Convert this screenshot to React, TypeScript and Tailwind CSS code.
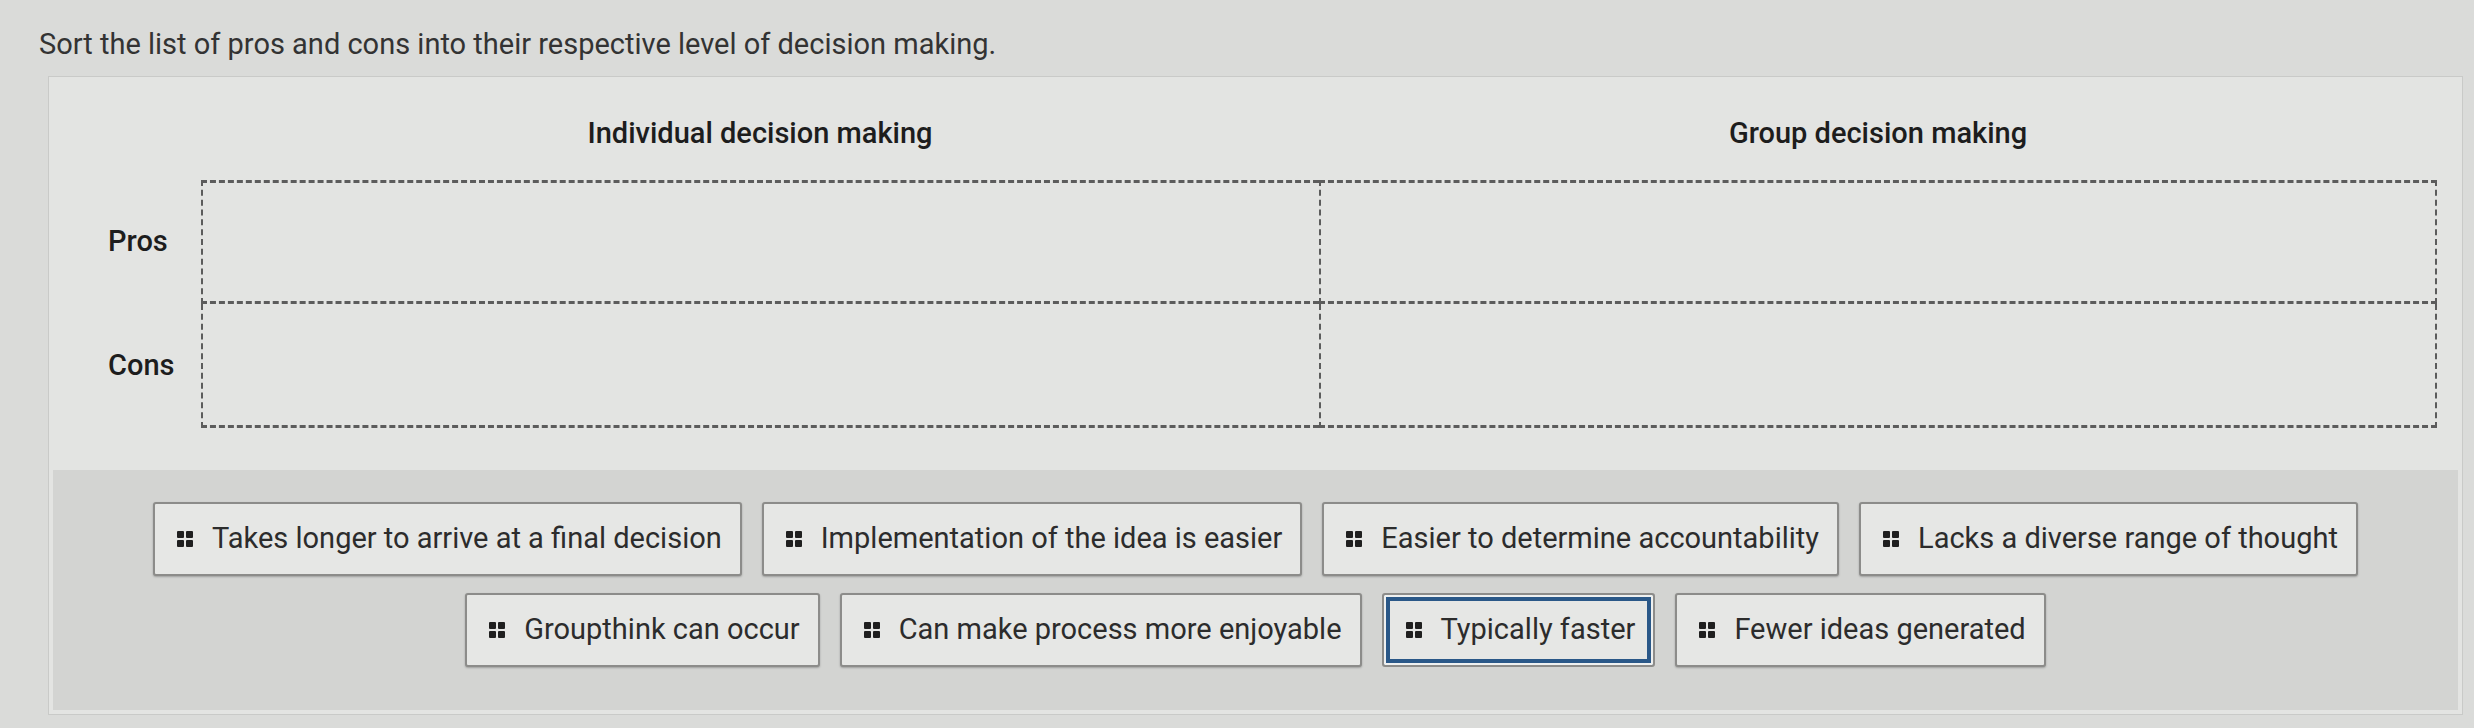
import React from "react";

const choices = [
  { text: "Takes longer to arrive at a final decision" },
  { text: "Implementation of the idea is easier" },
  { text: "Easier to determine accountability" },
  { text: "Lacks a diverse range of thought" },
  { text: "Groupthink can occur" },
  { text: "Can make process more enjoyable" },
  { text: "Typically faster", selected: true },
  { text: "Fewer ideas generated" },
];

function DragHandle() {
  return (
    <span className="grid grid-cols-2 gap-[2px] shrink-0">
      <span className="w-[7px] h-[7px] rounded-[1px] bg-[#1f1f1f]" />
      <span className="w-[7px] h-[7px] rounded-[1px] bg-[#1f1f1f]" />
      <span className="w-[7px] h-[7px] rounded-[1px] bg-[#1f1f1f]" />
      <span className="w-[7px] h-[7px] rounded-[1px] bg-[#1f1f1f]" />
    </span>
  );
}

function Chip({ text, selected }: { text: string; selected?: boolean }) {
  return (
    <div
      className={`h-[74px] flex items-center gap-[19px] pl-[22px] pr-[18px] rounded-[3px] border-2 border-[#8c8c8a] bg-[#e6e7e5] text-[29px] text-[#2c2c2c] ${
        selected
          ? "shadow-[inset_0_0_0_2px_#eef0f0,inset_0_0_0_6px_#2a5888]"
          : "shadow-[0_1px_2px_rgba(0,0,0,0.25)]"
      }`}
    >
      <DragHandle />
      <span className="whitespace-nowrap">{text}</span>
    </div>
  );
}

export default function App() {
  return (
    <div
      className="min-h-screen bg-[#dadbd9] pt-[27px] text-[#333]"
      style={{ fontFamily: "Roboto, 'Liberation Sans', sans-serif" }}
    >
      <p className="pl-[39px] text-[29px] leading-[34px]">
        Sort the list of pros and cons into their respective level of decision making.
      </p>

      <div className="ml-[48px] mr-[11px] mt-[15px] border border-[#c9cac8] bg-[#e3e4e2] pb-[4px]">
        {/* column headers */}
        <div className="grid grid-cols-[152px_1fr_1fr] mr-[25px] h-[103px] items-center pt-[10px] text-[29px] font-medium text-[#1d1d1d]">
          <div />
          <div className="text-center">Individual decision making</div>
          <div className="text-center">Group decision making</div>
        </div>

        {/* drop zones */}
        <div className="grid grid-cols-[152px_1fr_1fr] mr-[25px]">
          <div className="h-[124px] flex items-center pl-[59px] text-[29px] font-medium text-[#1d1d1d]">
            Pros
          </div>
          <div className="border-x-2 border-y-[3px] border-dashed border-[#5c5c5c] border-r-0" />
          <div className="border-x-2 border-y-[3px] border-dashed border-[#5c5c5c]" />
          <div className="h-[124px] flex items-center pl-[59px] text-[29px] font-medium text-[#1d1d1d]">
            Cons
          </div>
          <div className="border-x-2 border-y-[3px] border-dashed border-[#5c5c5c] border-t-0 border-r-0" />
          <div className="border-x-2 border-y-[3px] border-dashed border-[#5c5c5c] border-t-0" />
        </div>

        {/* choice bank */}
        <div className="mx-[4px] mt-[42px] h-[240px] bg-[#d3d4d2] px-[20px] pt-[32px]">
          <div className="flex flex-wrap justify-center gap-x-[20px] gap-y-[17px]">
            {choices.map((c) => (
              <Chip key={c.text} text={c.text} selected={c.selected} />
            ))}
          </div>
        </div>
      </div>
    </div>
  );
}
